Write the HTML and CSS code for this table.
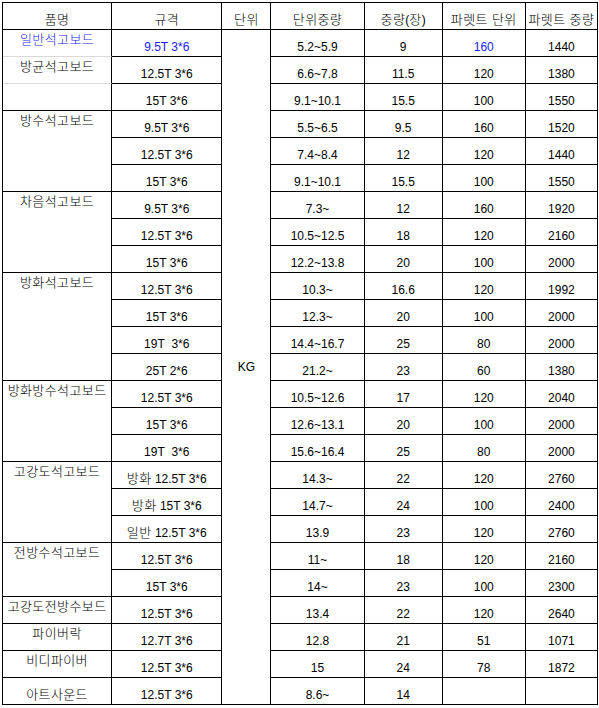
FILE: index.html
```html
<!DOCTYPE html>
<html lang="ko">
<head>
<meta charset="utf-8">
<title>석고보드 규격표</title>
<link rel="stylesheet" href="styles.css">
</head>
<body>
<table class="spec">
  <colgroup>
    <col class="c1"><col class="c2"><col class="c3"><col class="c4"><col class="c5"><col class="c6"><col class="c7">
  </colgroup>
  <tr class="head">
    <td><span class="ko">품명</span></td><td><span class="ko">규격</span></td><td><span class="ko">단위</span></td><td><span class="ko">단위중량</span></td><td><span class="ko">중량</span>(<span class="ko">장</span>)</td><td><span class="ko">파렛트 단위</span></td><td><span class="ko">파렛트 중량</span></td>
  </tr>
  <tr>
    <td class="name grid blue"><span class="ko">일반석고보드</span></td><td class="blue">9.5T 3*6</td><td class="unit" rowspan="25">KG</td><td>5.2~5.9</td><td>9</td><td class="blue">160</td><td>1440</td>
  </tr>
  <tr>
    <td class="name grid"><span class="ko">방균석고보드</span></td><td>12.5T 3*6</td><td>6.6~7.8</td><td>11.5</td><td>120</td><td>1380</td>
  </tr>
  <tr>
    <td class="name"></td><td>15T 3*6</td><td>9.1~10.1</td><td>15.5</td><td>100</td><td>1550</td>
  </tr>
  <tr>
    <td class="name" rowspan="3"><span class="ko">방수석고보드</span></td><td>9.5T 3*6</td><td>5.5~6.5</td><td>9.5</td><td>160</td><td>1520</td>
  </tr>
  <tr><td>12.5T 3*6</td><td>7.4~8.4</td><td>12</td><td>120</td><td>1440</td></tr>
  <tr><td>15T 3*6</td><td>9.1~10.1</td><td>15.5</td><td>100</td><td>1550</td></tr>
  <tr>
    <td class="name" rowspan="3"><span class="ko">차음석고보드</span></td><td>9.5T 3*6</td><td>7.3~</td><td>12</td><td>160</td><td>1920</td>
  </tr>
  <tr><td>12.5T 3*6</td><td>10.5~12.5</td><td>18</td><td>120</td><td>2160</td></tr>
  <tr><td>15T 3*6</td><td>12.2~13.8</td><td>20</td><td>100</td><td>2000</td></tr>
  <tr>
    <td class="name" rowspan="4"><span class="ko">방화석고보드</span></td><td>12.5T 3*6</td><td>10.3~</td><td>16.6</td><td>120</td><td>1992</td>
  </tr>
  <tr><td>15T 3*6</td><td>12.3~</td><td>20</td><td>100</td><td>2000</td></tr>
  <tr><td>19T&nbsp; 3*6</td><td>14.4~16.7</td><td>25</td><td>80</td><td>2000</td></tr>
  <tr><td>25T 2*6</td><td>21.2~</td><td>23</td><td>60</td><td>1380</td></tr>
  <tr>
    <td class="name" rowspan="3"><span class="ko">방화방수석고보드</span></td><td>12.5T 3*6</td><td>10.5~12.6</td><td>17</td><td>120</td><td>2040</td>
  </tr>
  <tr><td>15T 3*6</td><td>12.6~13.1</td><td>20</td><td>100</td><td>2000</td></tr>
  <tr><td>19T&nbsp; 3*6</td><td>15.6~16.4</td><td>25</td><td>80</td><td>2000</td></tr>
  <tr>
    <td class="name" rowspan="3"><span class="ko">고강도석고보드</span></td><td><span class="ko">방화</span> 12.5T 3*6</td><td>14.3~</td><td>22</td><td>120</td><td>2760</td>
  </tr>
  <tr><td><span class="ko">방화</span> 15T 3*6</td><td>14.7~</td><td>24</td><td>100</td><td>2400</td></tr>
  <tr><td><span class="ko">일반</span> 12.5T 3*6</td><td>13.9</td><td>23</td><td>120</td><td>2760</td></tr>
  <tr>
    <td class="name" rowspan="2"><span class="ko">전방수석고보드</span></td><td>12.5T 3*6</td><td>11~</td><td>18</td><td>120</td><td>2160</td>
  </tr>
  <tr><td>15T 3*6</td><td>14~</td><td>23</td><td>100</td><td>2300</td></tr>
  <tr>
    <td class="name"><span class="ko">고강도전방수보드</span></td><td>12.5T 3*6</td><td>13.4</td><td>22</td><td>120</td><td>2640</td>
  </tr>
  <tr>
    <td class="name"><span class="ko">파이버락</span></td><td>12.7T 3*6</td><td>12.8</td><td>21</td><td>51</td><td>1071</td>
  </tr>
  <tr>
    <td class="name"><span class="ko">비디파이버</span></td><td>12.5T 3*6</td><td>15</td><td>24</td><td>78</td><td>1872</td>
  </tr>
  <tr>
    <td><span class="ko">아트사운드</span></td><td>12.5T 3*6</td><td>8.6~</td><td>14</td><td></td><td></td>
  </tr>
</table>
</body>
</html>
```

FILE: styles.css
```css
html, body {
  margin: 0;
  padding: 0;
  background: #ffffff;
}

body {
  padding: 2px 0 0 2px;
}

.spec {
  border-collapse: separate;
  border-spacing: 0;
  table-layout: fixed;
  width: 596px;
  border-top: 1px solid #000;
  border-left: 1px solid #000;
  font-family: "Liberation Sans", "Noto Sans CJK KR", sans-serif;
  font-size: 12px;
  color: #000;
}

.c1 { width: 109px; }
.c2 { width: 110px; }
.c3 { width: 49px; }
.c4 { width: 93px; }
.c5 { width: 78px; }
.c6 { width: 83px; }
.c7 { width: 72px; }

.spec tr {
  height: 27px;
}

.spec td {
  box-sizing: border-box;
  height: 27px;
  padding: 0 0 1px 0;
  border-right: 1px solid #000;
  border-bottom: 1px solid #000;
  text-align: center;
  vertical-align: bottom;
  line-height: 15px;
  white-space: nowrap;
  overflow: visible;
}

.ko {
  font-family: "Noto Sans CJK KR", sans-serif;
  font-size: 13px;
  letter-spacing: 0.4px;
  font-weight: 300;
}

.spec td.name {
  vertical-align: top;
  padding: 1px 0 0 0;
}

.spec td.grid {
  border-bottom-color: #d9d9d9;
}

.spec td.unit {
  vertical-align: middle;
  padding: 0;
}

.blue {
  color: #1a1aff;
}
```
